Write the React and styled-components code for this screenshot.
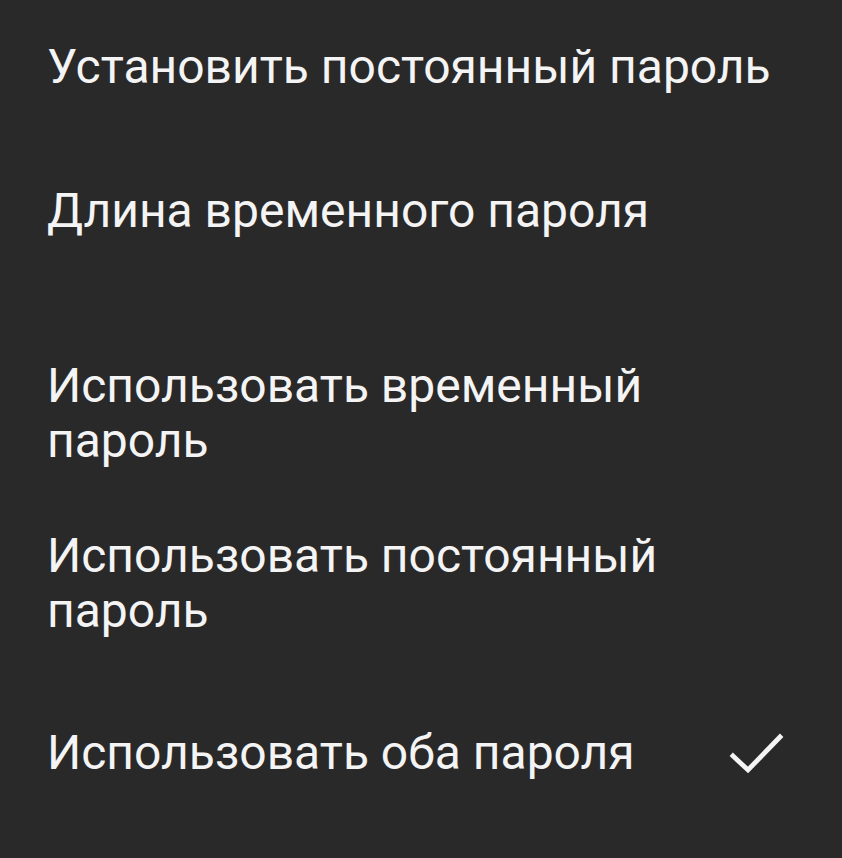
import { createGlobalStyle, styled } from 'styled-components';

const GlobalStyle = createGlobalStyle`
    html, body {
        margin: 0;
        padding: 0;
        background: #2a292a;
    }
`;

const items = [
    { label: 'Установить постоянный пароль', space: 0 },
    { label: 'Длина временного пароля', space: 89 },
    { label: 'Использовать временный пароль', space: 120 },
    { label: 'Использовать постоянный пароль', space: 60 },
    { label: 'Использовать оба пароля', space: 87, checked: true },
];

function App() {
    return (
        <>
            <GlobalStyle />
            <Menu>
                {items.map((item) => (
                    <MenuItem key={item.label} $space={item.space}>
                        <Label>{item.label}</Label>
                        {item.checked && (
                            <Check viewBox="0 0 56 44" aria-hidden="true">
                                <polyline points="5,25 20,39 52,6" />
                            </Check>
                        )}
                    </MenuItem>
                ))}
            </Menu>
        </>
    );
}

export default App;

const Menu = styled.div`
    display: flex;
    flex-direction: column;
    width: 842px;
    height: 858px;
    box-sizing: border-box;
    padding: 39px 0 0 47px;
    background-color: #2a292a;
    font-family: Roboto, "Noto Sans", sans-serif;
    color: #f4f4f4;
    overflow: hidden;
`;

const MenuItem = styled.div`
    display: flex;
    align-items: center;
    justify-content: space-between;
    margin-top: ${(p) => p.$space}px;
    padding-right: 58px;
`;

const Label = styled.p`
    margin: 0;
    max-width: 740px;
    font-size: 48px;
    line-height: 55px;
    font-weight: 400;
`;

const Check = styled.svg`
    width: 56px;
    height: 44px;
    flex-shrink: 0;

    polyline {
        fill: none;
        stroke: #f4f4f4;
        stroke-width: 4.8;
        stroke-linecap: square;
        stroke-linejoin: miter;
    }
`;
